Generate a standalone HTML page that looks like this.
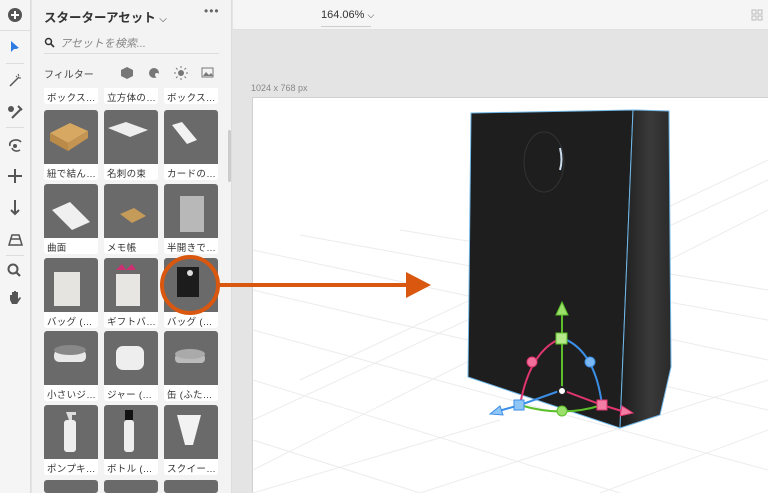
<!DOCTYPE html>
<html><head><meta charset="utf-8"><style>
*{margin:0;padding:0;box-sizing:border-box}
html,body{width:768px;height:493px;overflow:hidden}
body{position:relative;background:#e4e4e4;font-family:"Liberation Sans","Noto Sans CJK JP",sans-serif}
.tb{position:absolute;left:0;top:0;width:31px;height:493px;background:#f5f5f5;border-right:1px solid #ddd}
.panel{position:absolute;left:32px;top:0;width:200px;height:493px;background:#f3f3f3;border-right:1px solid #ddd;overflow:hidden}
.top{position:absolute;left:233px;top:0;width:535px;height:30px;background:#f5f5f5;border-bottom:1px solid #e0e0e0}
.t{position:absolute;width:54px;height:70px;border-radius:3px;background:#fff;overflow:hidden}
.t .im{height:54px;background:#6a6a6a}
.t .lb{font-size:9.5px;color:#333;padding:2px 3px;white-space:nowrap;letter-spacing:.3px}
.sep{position:absolute;left:6px;width:18px;height:1px;background:#ddd}
</style></head><body>
<div class="tb">
<svg width="31" height="320" style="position:absolute;left:0;top:0">
<line x1="0" y1="30.5" x2="31" y2="30.5" stroke="#ddd"/>
<circle cx="15" cy="15" r="7" fill="#555"/><path d="M15 11v8M11 15h8" stroke="#fff" stroke-width="2"/>
<path d="M11 41l0 11 3-3 3 0z" fill="#2d7ce3"/><path d="M11 41l8 7-4 1z" fill="#2d7ce3"/>
<path d="M10 86l9-9" stroke="#555" stroke-width="1.5"/><path d="M18 74l1 2M21 78l-2 0M16 76l1 1" stroke="#555"/>
<circle cx="11" cy="109" r="3" fill="#555"/><path d="M12 118l9-9M18 106l4 4" stroke="#555" stroke-width="2"/>
<path d="M10 146c-2-6 8-8 11-4M20 150c-3 2-7 1-8-2" stroke="#555" stroke-width="1.6" fill="none"/><circle cx="15" cy="146" r="2" fill="#555"/>
<path d="M15 169v14M8 176h14" stroke="#555" stroke-width="2"/>
<path d="M15 200v14M11 210l4 4 4-4" stroke="#555" stroke-width="2" fill="none"/>
<path d="M9 245l3-10h7l3 10zM10 239h11" stroke="#555" stroke-width="1.5" fill="none"/>
<circle cx="13" cy="269" r="4.5" stroke="#555" stroke-width="2" fill="none"/><path d="M16 272l4 4" stroke="#555" stroke-width="2.2"/>
<path d="M10 300v-5l2 0v3v-6h2v5v-6h2v6v-5h2v7l2-2 1 1-4 6h-5z" fill="#555"/>
</svg>
<div class="sep" style="top:63px"></div><div class="sep" style="top:127px"></div><div class="sep" style="top:255px"></div>
</div>
<div class="panel">
<div id="grid"></div>
<div style="position:absolute;left:0;top:0;width:200px;height:88px;background:#f3f3f3"></div>
<div style="position:absolute;left:12px;top:7px;font-size:12.5px;font-weight:bold;color:#333">スターターアセット <span style="font-weight:normal;font-size:10px">⌵</span></div>
<div style="position:absolute;left:172px;top:4px;font-size:12px;color:#666;letter-spacing:1px">•••</div>
<svg width="12" height="12" style="position:absolute;left:12px;top:37px"><circle cx="4.5" cy="4.5" r="3" stroke="#333" stroke-width="1.5" fill="none"/><path d="M7 7l3 3" stroke="#333" stroke-width="1.6"/></svg>
<div style="position:absolute;left:28px;top:35px;font-size:11px;color:#888;font-style:italic">アセットを検索...</div>
<div style="position:absolute;left:12px;top:53px;width:175px;height:1px;background:#ddd"></div>
<div style="position:absolute;left:12px;top:66px;font-size:10px;color:#444">フィルター</div>
<svg width="100" height="14" style="position:absolute;left:88px;top:66px">
<path d="M7 1l6 3v6l-6 3-6-3V4z" fill="#777"/>
<circle cx="34" cy="7" r="5" fill="#777"/><circle cx="37" cy="9" r="2" fill="#f3f3f3"/>
<circle cx="61" cy="7" r="3" fill="#777"/><path d="M61 0v2M61 12v2M54 7h2M66 7h2M56 2l1.5 1.5M66 12l-1.5-1.5M56 12l1.5-1.5M66 2l-1.5 1.5" stroke="#777"/>
<rect x="82" y="2" width="11" height="9" fill="none" stroke="#777"/><path d="M83 10l3-4 3 3 2-2 2 3z" fill="#777"/>
</svg>
<div style="position:absolute;left:196px;top:130px;width:3px;height:52px;background:#ccc;border-radius:2px"></div>
<svg width="200" height="493" style="position:absolute;left:0;top:0">
<path d="M18 133l20-10 18 8-20 12z" fill="#d6a862"/><path d="M18 133l18 10v8l-18-10z" fill="#b98a48"/><path d="M36 143l20-12v7l-20 13z" fill="#c49452"/>
<path d="M76 128l18-6 22 8-18 7z" fill="#eee"/><path d="M140 125l10-3 15 18-10 4z" fill="#f2f2f2"/>
<path d="M20 210l18-8 20 20-18 8z" fill="#f0f0f0"/><path d="M88 214l14-6 12 8-14 7z" fill="#c59b5a"/>
<path d="M148 196h24v36h-24z" fill="#b8b8b8"/>
<path d="M22 272h26v34h-26z" fill="#e6e4e0"/><path d="M84 274h24v32h-24z" fill="#e8e6e2"/><path d="M84 270l6-6 4 6 6-6 4 6z" fill="#cc3070"/>
<path d="M145 267h22v30h-22z" fill="#1c1c1c"/><circle cx="158" cy="273" r="3" fill="#ddd"/>
<rect x="22" y="350" width="32" height="12" rx="5" fill="#e9e9e9"/><ellipse cx="38" cy="350" rx="16" ry="5" fill="#888"/>
<rect x="84" y="346" width="28" height="24" rx="7" fill="#eee"/>
<rect x="143" y="354" width="30" height="9" rx="4" fill="#bbb"/><ellipse cx="158" cy="354" rx="15" ry="5" fill="#aaa"/>
<rect x="32" y="420" width="12" height="32" rx="3" fill="#eee"/><path d="M34 412h10v3h-4v5h-3z" fill="#ddd"/>
<rect x="92" y="420" width="10" height="32" rx="3" fill="#eee"/><rect x="93" y="410" width="8" height="10" fill="#111"/>
<path d="M145 415h24l-8 30h-8z" fill="#f2f2f2"/>
<circle cx="158" cy="285" r="28" fill="none" stroke="#d9570f" stroke-width="4"/>
</svg>
</div>
<div class="top">
<div style="position:absolute;left:88px;top:9px;font-size:11px;color:#333">164.06% <span style="font-size:9px">⌵</span></div>
<div style="position:absolute;left:88px;top:26px;width:50px;height:1px;background:#ccc"></div>
<svg width="12" height="12" style="position:absolute;left:518px;top:9px"><rect x="1" y="1" width="4" height="4" fill="none" stroke="#bbb"/><rect x="7" y="1" width="4" height="4" fill="none" stroke="#bbb"/><rect x="1" y="7" width="4" height="4" fill="none" stroke="#bbb"/><rect x="7" y="7" width="4" height="4" fill="none" stroke="#bbb"/></svg>
</div>
<div style="position:absolute;left:251px;top:83px;font-size:9px;color:#888">1024 x 768 px</div>
<div style="position:absolute;left:252px;top:97px;width:516px;height:396px;background:#fff;border-top:1px solid #d0d0d0;border-left:1px solid #d0d0d0"></div>
<svg width="768" height="493" style="position:absolute;left:0;top:0">
<g stroke="#ececec" stroke-width="1" fill="none">
<path d="M253 330L768 470M253 380L620 493M253 440L420 493M253 290L768 410M253 250L768 360M300 235L768 320M400 230L768 290M253 470L768 210M253 420L768 180M300 380L768 160M253 493L500 420M420 493L768 380M600 493L768 430"/>
</g>
<defs><linearGradient id="sg" x1="0" y1="0" x2="1" y2="0"><stop offset="0" stop-color="#1c1c1c"/><stop offset=".6" stop-color="#3a3a3a"/><stop offset="1" stop-color="#2a2a2a"/></linearGradient></defs>
<path d="M471 113L633 110L620 428L468 377Z" fill="#1e1e1e" stroke="#6fb7e8" stroke-width="1"/>
<path d="M633 110L669 111L671 367L660 415L620 428Z" fill="url(#sg)" stroke="#6fb7e8" stroke-width="1"/>
<ellipse cx="544" cy="162" rx="20" ry="30" fill="none" stroke="#333"/>
<path d="M560 148q3 12 0 22" stroke="#cde" stroke-width="2" fill="none"/>
<g stroke-width="2" fill="none">
<path d="M562 338Q530 350 520 405" stroke="#e0356e"/>
<path d="M562 338Q595 350 602 405" stroke="#3b8ee6"/>
<path d="M520 405Q562 418 602 405" stroke="#5cbf2a"/>
<path d="M562 390V315" stroke="#5cbf2a"/>
<path d="M562 390L520 405L495 412" stroke="#3b8ee6"/>
<path d="M562 390L602 405L625 412" stroke="#e0356e"/>
</g>
<path d="M562 302l-6 13h12z" fill="#9be06b" stroke="#5cbf2a"/>
<rect x="556" y="333" width="11" height="11" fill="#b5e98c" stroke="#5cbf2a"/>
<circle cx="532" cy="362" r="5" fill="#f06f9b" stroke="#e0356e"/>
<circle cx="590" cy="362" r="5" fill="#7ab8f5" stroke="#3b8ee6"/>
<rect x="514" y="400" width="10" height="10" fill="#8fc6f6" stroke="#3b8ee6"/>
<rect x="597" y="400" width="10" height="10" fill="#f27ea5" stroke="#e0356e"/>
<circle cx="562" cy="411" r="5" fill="#9be06b" stroke="#5cbf2a"/>
<path d="M490 414l10-8 3 9z" fill="#8fc6f6" stroke="#3b8ee6"/>
<path d="M633 413l-11-7-2 10z" fill="#f27ea5" stroke="#e0356e"/>
<circle cx="562" cy="391" r="4" fill="#fff" stroke="#222" stroke-width="2"/>
<path d="M218 285H408" stroke="#d9570f" stroke-width="4"/>
<path d="M406 272L431 285L406 298Z" fill="#d9570f"/>
</svg>
<script>
var L=[["ボックス…","立方体の…","ボックス…"],["紐で結ん…","名刺の束","カードの…"],["曲面","メモ帳","半開きで…"],["バッグ (…","ギフトバ…","バッグ (…"],["小さいジ…","ジャー (…","缶 (ふた…"],["ポンプキ…","ボトル (…","スクイー…"],["","",""]];
var tops=[34,110,184,258,331,405,480],xs=[12,72,132],h="";
for(var r=0;r<7;r++)for(var c=0;c<3;c++){h+='<div class="t" style="left:'+xs[c]+'px;top:'+tops[r]+'px'+(r==6?';height:13px':'')+'"><div class="im"></div><div class="lb">'+L[r][c]+'</div></div>';}
document.getElementById("grid").innerHTML=h;
</script>
</body></html>
